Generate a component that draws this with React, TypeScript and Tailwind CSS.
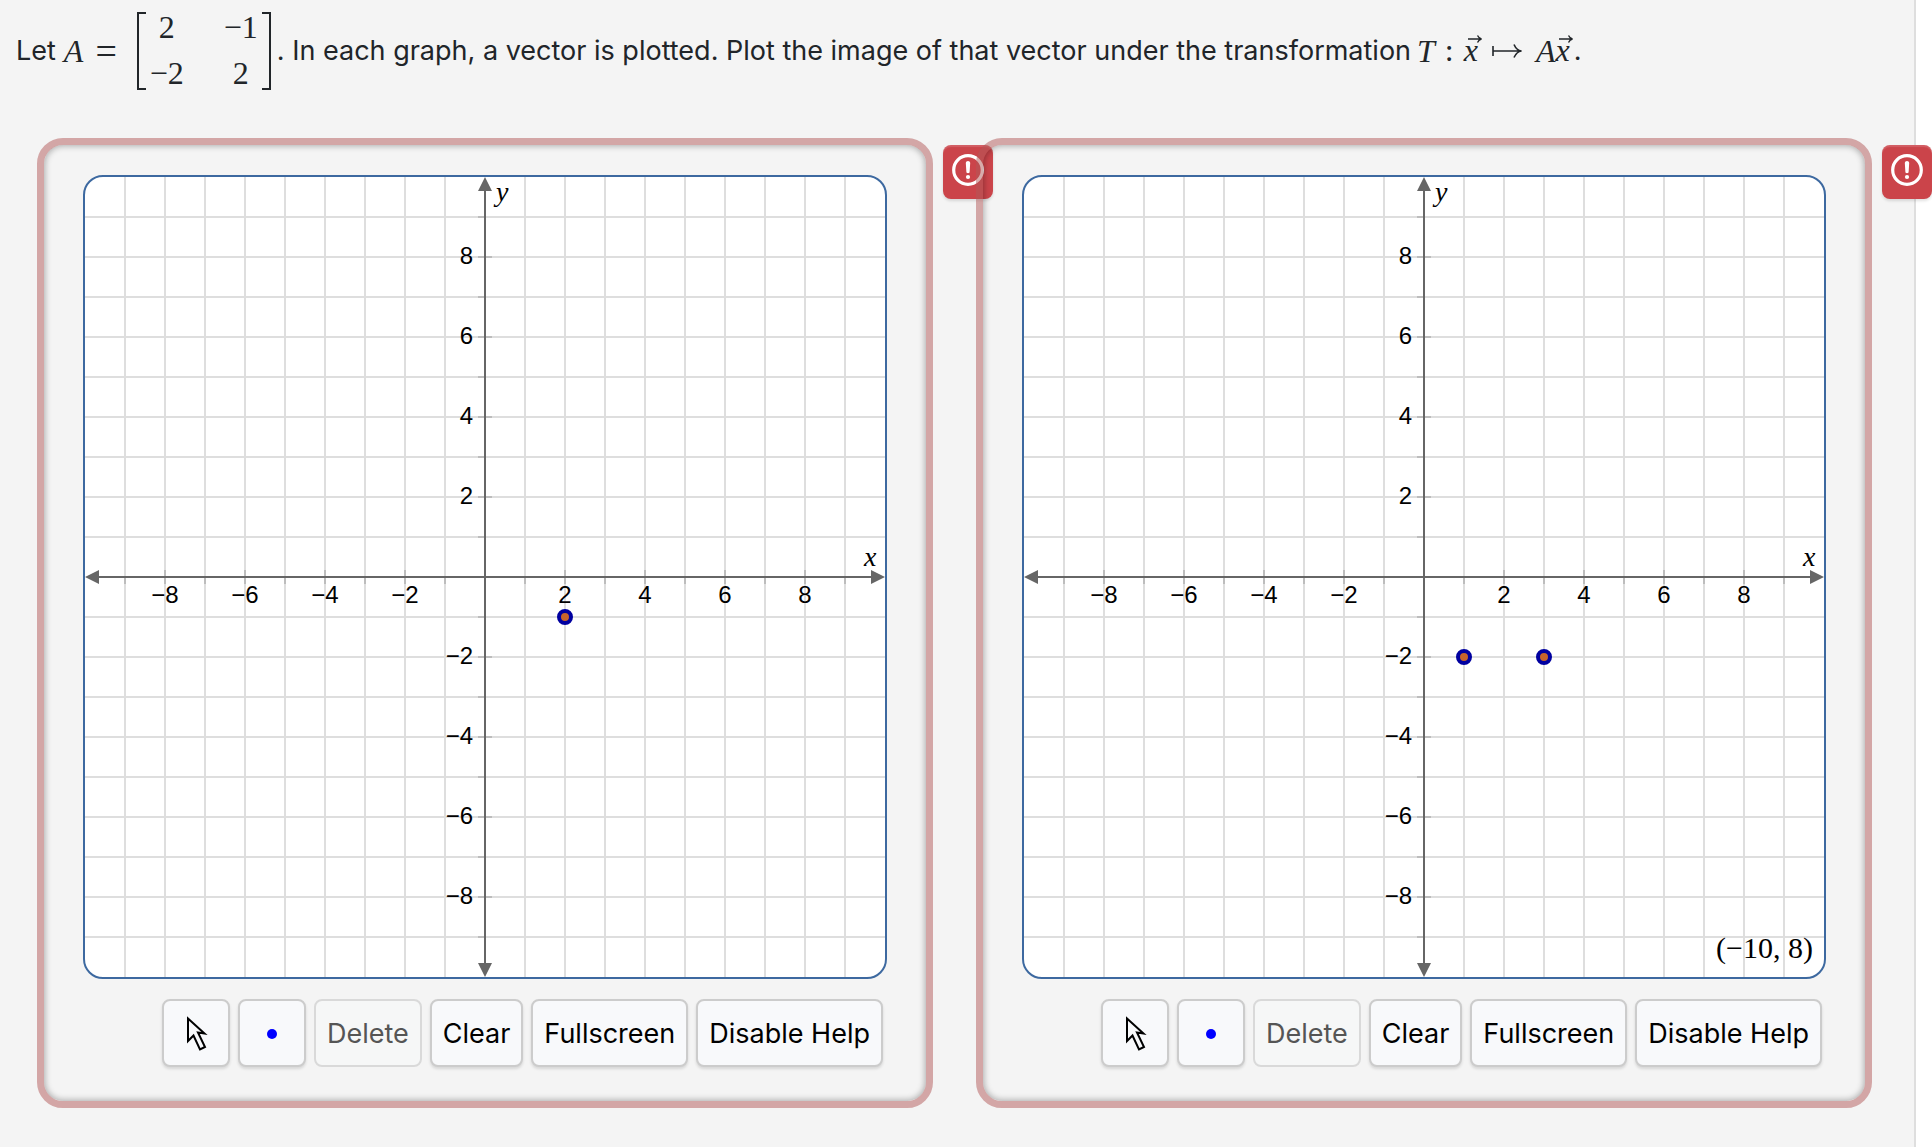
import type { ReactNode } from "react";

type Point = { x: number; y: number };

const UNIT = 40;
const TICKS = [-9, -8, -7, -6, -5, -4, -3, -2, -1, 1, 2, 3, 4, 5, 6, 7, 8, 9];

const px = (x: number) => 400 + x * UNIT;
const py = (y: number) => 400 - y * UNIT;
const label = (n: number) => (n < 0 ? `−${-n}` : `${n}`);

function MathText({ children, italic = false }: { children: ReactNode; italic?: boolean }) {
  return (
    <span className={`font-['Liberation_Serif',serif] text-[32px] leading-8 ${italic ? "italic" : ""}`}>
      {children}
    </span>
  );
}

function VectorX() {
  return (
    <span className="relative">
      <MathText italic>x</MathText>
      <svg className="absolute left-1 top-0 w-3.5 h-2.5" viewBox="0 0 14 10" fill="none" stroke="currentColor" strokeWidth="1.4">
        <path d="M0 5H13M9.5 1.5C10.5 3.5 11.5 4.5 13.5 5C11.5 5.5 10.5 6.5 9.5 8.5" />
      </svg>
    </span>
  );
}

function Matrix() {
  return (
    <span className="grid grid-cols-[34px_34px] gap-x-10 gap-y-3.5 px-[13px] pb-0.5 h-[78px] relative justify-items-center content-center">
      <span className="absolute left-0 inset-y-0 w-[9px] border-2 border-r-0 border-[#212529]" />
      <MathText>2</MathText>
      <MathText>−1</MathText>
      <MathText>−2</MathText>
      <MathText>2</MathText>
      <span className="absolute right-0 inset-y-0 w-[9px] border-2 border-l-0 border-[#212529]" />
    </span>
  );
}

function Graph({ points, readout }: { points: Point[]; readout?: string }) {
  return (
    <div className="bg-white border-2 border-[#3d69a0] rounded-[20px] overflow-hidden">
      <svg viewBox="0 0 800 800" className="block w-full h-auto">
        {/* Grid */}
        <g stroke="#dedede" strokeWidth="2">
          {TICKS.map((n) => (
            <path key={n} d={`M${px(n)} 0V800M0 ${py(n)}H800`} />
          ))}
        </g>
        {/* Tick marks, the odd ones reach to one side only */}
        <g stroke="#bdbdbd" strokeWidth="2">
          {TICKS.map((n) => {
            const s = n % 2 === 0 ? 7 : 0;
            return <path key={n} d={`M${px(n)} ${400 - s}V407M393 ${py(n)}H${400 + s}`} />;
          })}
        </g>
        {/* Axes */}
        <path d="M8 400H792M400 8V792" stroke="#666" strokeWidth="2" />
        <path
          d="M0 400L14 393V407ZM800 400L786 393V407ZM400 0L393 14H407ZM400 800L393 786H407Z"
          fill="#666"
        />
        <g className="font-['Liberation_Sans',sans-serif] text-[24px]">
          {TICKS.filter((n) => n % 2 === 0).map((n) => (
            <g key={n}>
              <text x={px(n)} y="426" textAnchor="middle">{label(n)}</text>
              <text x="388" y={py(n) + 7} textAnchor="end">{label(n)}</text>
            </g>
          ))}
        </g>
        <g className="font-['Liberation_Serif',serif] text-[28px] italic">
          <text x="779" y="389">x</text>
          <text x="411" y="24">y</text>
        </g>
        {readout && (
          <text x="789" y="781" textAnchor="end" className="font-['Liberation_Serif',serif] text-[30px]">
            {readout}
          </text>
        )}
        {points.map((p) => (
          <circle key={`${p.x},${p.y}`} cx={px(p.x)} cy={py(p.y)} r="6" fill="#c8642a" stroke="#0000a0" strokeWidth="4" />
        ))}
      </svg>
    </div>
  );
}

function ToolButton({ children, title, disabled }: { children: ReactNode; title?: string; disabled?: boolean }) {
  return (
    <button
      aria-label={title}
      disabled={disabled}
      className="flex items-center justify-center h-[68px] min-w-[68px] px-[11px] pt-0.5 whitespace-nowrap bg-[#f8f9fb] border-2 border-[#ccc] rounded-lg shadow-[0_2px_3px_rgba(0,0,0,0.12)] text-[27px] text-black disabled:text-[#555] disabled:bg-[#f6f7f7] disabled:border-[#d9d9d9] disabled:shadow-none"
    >
      {children}
    </button>
  );
}

function ErrorBadge() {
  return (
    <button
      aria-label="Incorrect"
      className="absolute left-full top-[7px] ml-[10px] flex justify-center w-[50px] h-[54px] pt-[9px] bg-[#cb444a] rounded-lg shadow-[inset_0_2px_1px_rgba(255,255,255,0.15),0_2px_3px_rgba(0,0,0,0.12)]"
    >
      <svg className="w-8 h-8" viewBox="0 0 32 32" fill="none" stroke="#fff">
        <circle cx="16" cy="16" r="14.3" strokeWidth="3.2" />
        <path d="M13.8 9C13.8 6.3 18.2 6.3 18.2 9L17.6 18C17.4 19.6 14.6 19.6 14.4 18Z" fill="#fff" stroke="none" />
        <circle cx="16" cy="23" r="2.1" fill="#fff" stroke="none" />
      </svg>
    </button>
  );
}

function GraphPanel({ points, readout }: { points: Point[]; readout?: string }) {
  return (
    <section className="relative flex-1 min-w-0">
      <ErrorBadge />
      <div className="relative border-[7px] border-[rgba(178,88,88,0.5)] rounded-[26px] pt-[30px] px-[39px] pb-[34px] shadow-[inset_0_0_6px_1px_rgba(0,0,0,0.3)]">
        <Graph points={points} readout={readout} />
        <div className="flex justify-end gap-2 mt-5 mr-1">
          <ToolButton title="Select">
            <svg className="w-6 h-9" viewBox="22 15 24 36" fill="none" stroke="#000" strokeWidth="2">
              <path d="M26 17.5L42.5 32.5L36 31.5L43 46L38 48.5L31.5 34.5L26 40Z" />
            </svg>
          </ToolButton>
          <ToolButton title="Point">
            <span className="size-2.5 rounded-full bg-[#0000ff]" />
          </ToolButton>
          <ToolButton disabled>Delete</ToolButton>
          <ToolButton>Clear</ToolButton>
          <ToolButton>Fullscreen</ToolButton>
          <ToolButton>Disable Help</ToolButton>
        </div>
      </div>
    </section>
  );
}

export default function App() {
  return (
    <div className="min-h-screen bg-white pr-4 font-[Inter,sans-serif] text-[#212529]">
      <main className="min-h-screen bg-[#f4f4f4] border-r-2 border-[#dedede] pt-3">
        <p className="flex flex-wrap items-center pl-4 text-[27px] leading-8">
          <span className="mr-2">Let</span>
          <MathText italic>A</MathText>
          <span className="font-['Liberation_Serif',serif] text-[38px] ml-3 mr-5">=</span>
          <Matrix />
          <span className="mx-1.5">
            . In each graph, a vector is plotted. Plot the image of that vector under the transformation
          </span>
          <MathText italic>T</MathText>
          <span className="mx-2.5">
            <MathText>:</MathText>
          </span>
          <VectorX />
          <svg className="w-[30px] h-4 mx-3.5" viewBox="0 0 30 16" fill="none" stroke="currentColor" strokeWidth="1.6">
            <path d="M1 3V13M1 8H29M22 1.5C23.5 5 26 7.5 29.5 8C26 8.5 23.5 11 22 14.5" />
          </svg>
          <MathText italic>A</MathText>
          <VectorX />
          <span className="ml-1">.</span>
        </p>
        <div className="flex gap-[43px] mt-12 pl-[37px] pr-[42px]">
          <GraphPanel points={[{ x: 2, y: -1 }]} />
          <GraphPanel points={[{ x: 1, y: -2 }, { x: 3, y: -2 }]} readout="(−10, 8)" />
        </div>
      </main>
    </div>
  );
}
